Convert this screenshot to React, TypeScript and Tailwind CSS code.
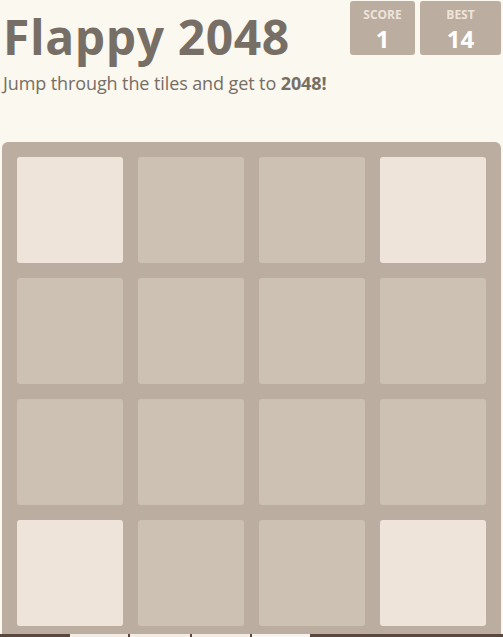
import React from 'react';

// 0 = empty cell, otherwise a tile value (rendered blank in this state)
const grid: number[][] = [
    [2, 0, 0, 2],
    [0, 0, 0, 0],
    [0, 0, 0, 0],
    [2, 0, 0, 2],
];

const ScoreBox: React.FC<{ label: string; value: number; width: string }> = ({ label, value, width }) => (
    <div className={`${width} h-[54px] rounded-[3px] bg-[#bbada0] flex flex-col items-center pt-[8px]`}>
        <span className="text-[12px] leading-[12px] font-bold uppercase text-[#eee4da]">{label}</span>
        <span className="text-[24px] leading-[24px] font-bold text-white mt-[6px]">{value}</span>
    </div>
);

const App: React.FC = () => {
    return (
        <div className="min-h-screen bg-[#faf8ef] text-[#776e65] font-['Open_Sans',sans-serif] overflow-hidden relative">
            <div className="pl-[2px] pr-[2px] pt-[1px]">
                <header className="flex justify-between items-start">
                    <h1 className="text-[48px] leading-[52px] font-bold mt-[10px] ml-[1px] tracking-[0.6px]">Flappy 2048</h1>
                    <div className="flex gap-[5px]">
                        <ScoreBox label="Score" value={1} width="w-[65px]" />
                        <ScoreBox label="Best" value={14} width="w-[81px]" />
                    </div>
                </header>
                <p className="text-[18px] leading-[22px] mt-[9px] ml-[1px] tracking-[-0.1px]">
                    Jump through the tiles and get to <strong>2048!</strong>
                </p>

                <div className="mt-[48px] w-[499px] rounded-[6px] bg-[#bbada0] p-[15px] grid grid-cols-4 gap-[15px]">
                    {grid.flat().map((v, i) => (
                        <div
                            key={i}
                            className={`h-[106px] rounded-[3px] ${v ? 'bg-[#eee4da]' : 'bg-[#cdc1b4]'}`}
                        />
                    ))}
                </div>
            </div>

            {/* strip of the page footer peeking in at the bottom edge */}
            <div className="fixed left-0 right-0 bottom-0 h-[3px] bg-[#5a4740] flex gap-[2px] pl-[70px]">
                <div className="w-[58px] bg-[#f3ede6]" />
                <div className="w-[60px] bg-[#f3ede6]" />
                <div className="w-[58px] bg-[#f3ede6]" />
                <div className="w-[58px] bg-[#f8f5f0]" />
            </div>
        </div>
    );
};

export default App;
